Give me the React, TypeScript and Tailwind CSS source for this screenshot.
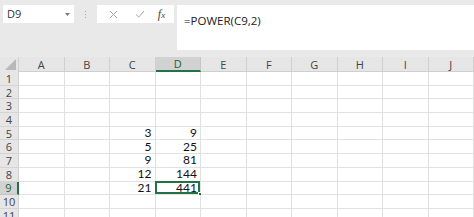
import React from 'react';

const COLS = ['A', 'B', 'C', 'D', 'E', 'F', 'G', 'H', 'I', 'J'];
const ROWS = [1, 2, 3, 4, 5, 6, 7, 8, 9, 10, 11];

// values keyed by row -> [C, D]
const DATA: Record<number, [number, number]> = {
  5: [3, 9],
  6: [5, 25],
  7: [9, 81],
  8: [12, 144],
  9: [21, 441],
};

function Toolbar() {
  return (
    <div className="h-[57px] bg-[#e9e9e9] flex items-start pt-[5px] pl-[3px] gap-0">
      {/* name box */}
      <div className="w-[71px] h-[18px] bg-white flex items-center justify-between pl-[4px] pr-[4px]">
        <span className="text-[11px] text-[#333]" style={{ fontFamily: '"Open Sans", sans-serif' }}>D9</span>
        <svg width="5" height="3" viewBox="0 0 5 3"><path d="M0 0h5L2.5 3z" fill="#777" /></svg>
      </div>
      {/* dots */}
      <div className="w-[23px] h-[18px] flex flex-col items-center justify-center gap-[2px]">
        <div className="w-[1px] h-[1px] bg-[#aaa]" />
        <div className="w-[1px] h-[1px] bg-[#aaa]" />
        <div className="w-[1px] h-[1px] bg-[#aaa]" />
      </div>
      {/* cancel / enter / fx */}
      <div className="w-[77px] h-[18px] bg-white flex items-center">
        <div className="w-[27px] flex justify-center pl-[6px]">
          <svg width="9" height="9" viewBox="0 0 9 9"><path d="M1 1l7 7M8 1L1 8" stroke="#a6a6a6" strokeWidth="1" /></svg>
        </div>
        <div className="w-[27px] flex justify-center pl-[4px]">
          <svg width="10" height="8" viewBox="0 0 10 8"><path d="M1 4.5l2.8 2.6L9 1" stroke="#a6a6a6" strokeWidth="1" fill="none" /></svg>
        </div>
        <div className="flex-1 flex justify-center pr-[2px]">
          <span className="text-[12px] italic text-[#444] leading-none" style={{ fontFamily: '"Liberation Serif", serif' }}>
            f<span className="text-[9px]">x</span>
          </span>
        </div>
      </div>
      <div className="w-[3px]" />
      {/* formula bar */}
      <div className="flex-1 h-[45px] bg-white pl-[7px] pt-[2px]">
        <span className="text-[11.5px] text-[#222]" style={{ fontFamily: '"Open Sans", sans-serif' }}>=POWER(C9,2)</span>
      </div>
    </div>
  );
}

function HeaderRow() {
  return (
    <div className="flex h-[15px] bg-[#e6e6e6]">
      <div className="w-[19px] shrink-0 relative border-r border-[#d0d0d0]">
        <svg className="absolute right-[2px] bottom-[2px]" width="11" height="11" viewBox="0 0 11 11">
          <path d="M11 0V11H0z" fill="#b8b8b8" />
        </svg>
      </div>
      {COLS.map(c => {
        const sel = c === 'D';
        return (
          <div
            key={c}
            className={
              sel
                ? 'w-[45.5px] shrink-0 flex items-center justify-center bg-[#d2d2d2] border-r border-[#c6c6c6] border-b-2 border-b-[#217346] text-[#21603c]'
                : 'w-[45.5px] shrink-0 flex items-center justify-center border-r border-[#d0d0d0] border-b border-b-[#cfcfcf] text-[#444]'
            }
          >
            <span className="text-[11px] leading-none" style={{ fontFamily: '"Open Sans", sans-serif' }}>{c}</span>
          </div>
        );
      })}
    </div>
  );
}

function Row({ n }: { n: number }) {
  const sel = n === 9;
  const vals = DATA[n];
  return (
    <div className="flex h-[13.7px]">
      <div
        className={
          sel
            ? 'w-[19px] shrink-0 flex items-center justify-center bg-[#d2d2d2] border-r-2 border-r-[#217346] border-b border-[#c6c6c6] text-[#21603c]'
            : 'w-[19px] shrink-0 flex items-center justify-center bg-[#e6e6e6] border-r border-[#d0d0d0] border-b border-b-[#d4d4d4] text-[#444]'
        }
      >
        <span className="text-[11px] leading-none" style={{ fontFamily: '"Open Sans", sans-serif' }}>{n}</span>
      </div>
      {COLS.map(c => {
        let v: number | undefined;
        if (vals && c === 'C') v = vals[0];
        if (vals && c === 'D') v = vals[1];
        const active = sel && c === 'D';
        return (
          <div
            key={c}
            className="w-[45.5px] shrink-0 relative flex items-center justify-end pr-[3px] border-r border-b border-[#e1e1e1] bg-white"
          >
            {v !== undefined && (
              <span className="text-[12px] leading-none text-[#111]" style={{ fontFamily: '"Lato", "Open Sans", sans-serif' }}>{v}</span>
            )}
            {active && (
              <>
                <div className="absolute -left-[1px] -top-[1px] -right-[0px] -bottom-[0px] border-2 border-[#217346]" />
                <div className="absolute -right-[2px] -bottom-[2px] w-[4px] h-[4px] bg-[#217346] border border-white" />
              </>
            )}
          </div>
        );
      })}
    </div>
  );
}

export default function App() {
  return (
    <div className="w-[474px] h-[217px] overflow-hidden bg-white">
      <Toolbar />
      <HeaderRow />
      {ROWS.map(n => (
        <Row key={n} n={n} />
      ))}
    </div>
  );
}
